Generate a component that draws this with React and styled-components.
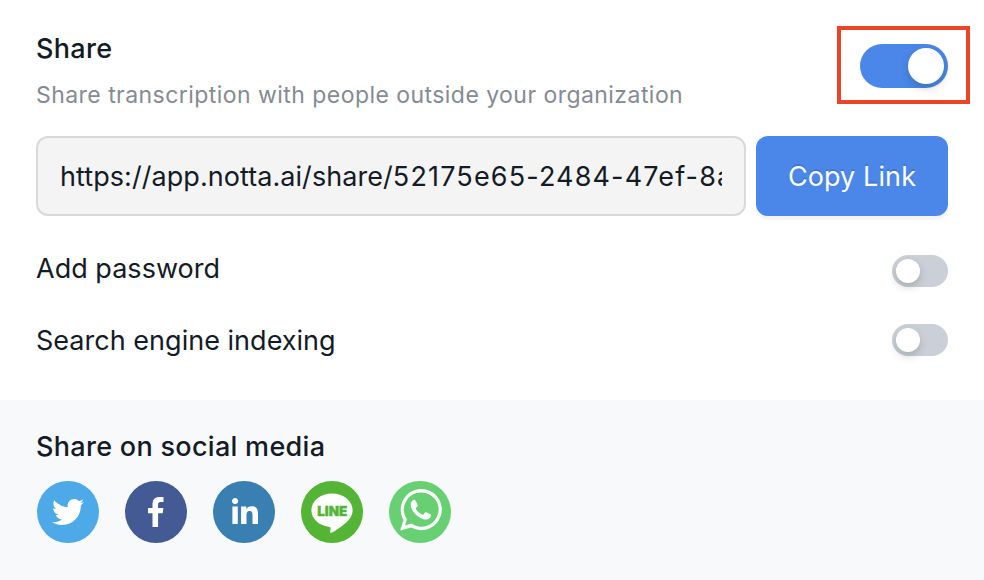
import React, { useState } from "react";
import styled, { createGlobalStyle } from "styled-components";

const GlobalStyle = createGlobalStyle`
    * {
        box-sizing: border-box;
    }
    body {
        margin: 0;
        background: #ffffff;
        color: #131b26;
        font-family: Inter, "Liberation Sans", sans-serif;
    }
`;

const Panel = styled.div`
    display: flex;
    flex-direction: column;
    width: 984px;
    height: 580px;
    overflow: hidden;
`;

const Settings = styled.section`
    height: 400px;
    padding: 28px 36px 0;
`;

const Header = styled.div`
    display: flex;
    justify-content: space-between;
    height: 108px;
`;

const Title = styled.h2`
    margin: 0;
    padding-top: 1px;
    font-size: 27px;
    font-weight: 500;
    line-height: 40px;
    letter-spacing: 0.3px;
    white-space: nowrap;
`;

const Subtitle = styled.p`
    margin: 10px 0 0;
    color: #848b93;
    font-size: 23px;
    line-height: 32px;
    letter-spacing: 0.45px;
    white-space: nowrap;
`;

const Highlight = styled.div`
    position: relative;
    height: 44px;
    margin-top: 16px;

    &::after {
        content: "";
        position: absolute;
        top: -18px;
        right: -22px;
        bottom: -16px;
        left: -23px;
        border: 4px solid #ec4427;
        pointer-events: none;
    }
`;

const Switch = styled.button`
    display: flex;
    align-items: center;
    justify-content: ${(props) => (props.$on ? "flex-end" : "flex-start")};
    width: ${(props) => (props.$large ? 88 : 56)}px;
    height: ${(props) => (props.$large ? 44 : 32)}px;
    padding: 4px;
    border: 0;
    border-radius: 22px;
    background: ${(props) => (props.$on ? "#4a87e8" : "#cbd0d8")};
    cursor: pointer;
`;

const Knob = styled.span`
    width: ${(props) => (props.$large ? 36 : 24)}px;
    height: ${(props) => (props.$large ? 36 : 24)}px;
    border-radius: 50%;
    background: #ffffff;
    box-shadow: 0 4px 8px rgba(0, 35, 11, 0.2);
`;

const LinkRow = styled.div`
    display: flex;
    gap: 10px;
    height: 80px;
`;

const LinkField = styled.div`
    width: 710px;
    padding: 1px 22px 0;
    border: 2px solid #d9d9d9;
    border-radius: 12px;
    background: #f4f4f4;
`;

const LinkText = styled.div`
    overflow: hidden;
    font-size: 27px;
    line-height: 75px;
    letter-spacing: 0.06px;
    white-space: nowrap;
`;

const ShareId = styled.span`
    letter-spacing: 1.15px;
`;

const CopyButton = styled.button`
    width: 192px;
    padding: 0;
    border: 0;
    border-radius: 12px;
    background: #4a87e8;
    box-shadow: 0 4px 0 rgba(0, 0, 0, 0.043);
    color: #ffffff;
    font-family: inherit;
    font-size: 27px;
    letter-spacing: 0.1px;
    text-shadow: 0 -2px 0 rgba(0, 0, 0, 0.12);
    cursor: pointer;
`;

const Options = styled.div`
    display: flex;
    flex-direction: column;
    gap: 34px;
    padding-top: 33px;
`;

const Option = styled.div`
    display: flex;
    align-items: flex-end;
    justify-content: space-between;
    height: ${(props) => props.$height}px;
`;

const OptionLabel = styled.span`
    align-self: flex-start;
    font-size: 27px;
    line-height: 40px;
    letter-spacing: 0.02px;
`;

const Social = styled.section`
    flex: 1;
    padding: 26px 36px 0;
    background: #f8f9fb;
`;

const SocialLinks = styled.div`
    display: flex;
    gap: 24px;
    margin-top: 13px;

    svg {
        display: block;
        width: 64px;
        height: 64px;
    }
`;

const LineText = styled.text`
    fill: #54b435;
    stroke: #54b435;
    stroke-width: 0.35px;
    font-family: Inter, sans-serif;
    font-size: 13.4px;
    font-weight: 900;
`;

const Toggle = ({ large, initial = false, label }) => {
    const [on, setOn] = useState(initial);
    return (
        <Switch $large={large} $on={on} role="switch" aria-checked={on} aria-label={label} onClick={() => setOn(!on)}>
            <Knob $large={large} />
        </Switch>
    );
};

const SocialIcon = ({ color, label, children }) => (
    <svg viewBox="0 0 64 64" role="img" aria-label={label}>
        <circle cx="32" cy="32" r="31" fill={color} />
        {children}
    </svg>
);

export default () => (
    <Panel>
        <GlobalStyle />
        <Settings>
            <Header>
                <div>
                    <Title>Share</Title>
                    <Subtitle>Share transcription with people outside your organization</Subtitle>
                </div>
                <Highlight>
                    <Toggle large initial label="Share" />
                </Highlight>
            </Header>
            <LinkRow>
                <LinkField>
                    <LinkText>
                        https://app.notta.ai/share/<ShareId>52175e65-2484-47ef-8a</ShareId>
                    </LinkText>
                </LinkField>
                <CopyButton>Copy Link</CopyButton>
            </LinkRow>
            <Options>
                <Option $height={38}>
                    <OptionLabel>Add password</OptionLabel>
                    <Toggle label="Add password" />
                </Option>
                <Option $height={35}>
                    <OptionLabel>Search engine indexing</OptionLabel>
                    <Toggle label="Search engine indexing" />
                </Option>
            </Options>
        </Settings>
        <Social>
            <Title>Share on social media</Title>
            <SocialLinks>
                <SocialIcon color="#4da9e8" label="Twitter">
                    <path
                        fill="#fff"
                        d="M48,22.1c-1.2,0.5-2.4,0.9-3.8,1c1.4-0.8,2.4-2.1,2.9-3.6c-1.3,0.8-2.7,1.3-4.2,1.6 C41.7,19.8,40,19,38.2,19c-3.6,0-6.6,2.9-6.6,6.6c0,0.5,0.1,1,0.2,1.5c-5.5-0.3-10.3-2.9-13.5-6.9c-0.6,1-0.9,2.1-0.9,3.3 c0,2.3,1.2,4.3,2.9,5.5c-1.1,0-2.1-0.3-3-0.8c0,0,0,0.1,0,0.1c0,3.2,2.3,5.8,5.3,6.4c-0.6,0.1-1.1,0.2-1.7,0.2c-0.4,0-0.8,0-1.2-0.1 c0.8,2.6,3.3,4.5,6.1,4.6c-2.2,1.8-5.1,2.8-8.2,2.8c-0.5,0-1.1,0-1.6-0.1c2.9,1.9,6.4,2.9,10.1,2.9c12.1,0,18.7-10,18.7-18.7 c0-0.3,0-0.6,0-0.8C46,24.5,47.1,23.4,48,22.1z"
                    />
                </SocialIcon>
                <SocialIcon color="#435a94" label="Facebook">
                    <path
                        fill="#fff"
                        d="M34.1,47V33.3h4.6l0.7-5.3h-5.3v-3.4c0-1.5,0.4-2.6,2.6-2.6l2.8,0v-4.8c-0.5-0.1-2.2-0.2-4.1-0.2 c-4.1,0-6.9,2.5-6.9,7V28H24v5.3h4.5V47H34.1z"
                    />
                </SocialIcon>
                <SocialIcon color="#397fb1" label="LinkedIn">
                    <path
                        fill="#fff"
                        d="M20.4,44h5.4V26.6h-5.4V44z M23.1,18c-1.7,0-3.1,1.4-3.1,3.1c0,1.7,1.4,3.1,3.1,3.1 c1.7,0,3.1-1.4,3.1-3.1C26.2,19.4,24.8,18,23.1,18z M39.5,26.2c-2.6,0-4.4,1.4-5.1,2.8h-0.1v-2.4h-5.2V44h5.4v-8.6 c0-2.3,0.4-4.5,3.2-4.5c2.8,0,2.8,2.6,2.8,4.6V44H46v-9.5C46,29.8,45,26.2,39.5,26.2z"
                    />
                </SocialIcon>
                <SocialIcon color="#54b435" label="LINE">
                    <path
                        fill="#fff"
                        d="M52.62 30.138c0 3.693-1.432 7.019-4.42 10.296h.001c-4.326 4.979-14 11.044-16.201 11.972-2.2.927-1.876-.591-1.786-1.112l.294-1.765c.069-.527.142-1.343-.066-1.865-.232-.574-1.146-.872-1.817-1.016-9.909-1.31-17.245-8.238-17.245-16.51 0-9.226 9.251-16.733 20.62-16.733 11.37 0 20.62 7.507 20.62 16.733z"
                    />
                    <LineText x="17.2" y="35.5" textLength="30" lengthAdjust="spacing">LINE</LineText>
                </SocialIcon>
                <SocialIcon color="#67d072" label="WhatsApp">
                    {/* bubble ring with its tail, then the handset */}
                    <path
                        fill="#fff"
                        fillRule="evenodd"
                        d="M33.1 9a20.6 20.6 0 1 1-9.9 38.6L12.2 50.6l3.3-10.6A20.6 20.6 0 0 1 33.1 9z M33.1 12.5a17.1 17.1 0 0 0-14.2 26.7l-1.9 6.2 6.6-1.9A17.1 17.1 0 1 0 33.1 12.5z"
                    />
                    <path
                        fill="#fff"
                        d="M25.2 20c.8-.5 1.9-.4 2.3.4l2.1 4.4c.3.7.1 1.2-.3 1.7l-1.3 1.5c-.3.4-.3.7-.1 1.1 1.5 2.6 3.8 4.6 6.5 5.7.5.2.8.1 1.1-.3l1.5-1.9c.4-.5.8-.5 1.4-.3l4 1.9c.6.3.7.6.6 1.3-.3 2.5-2.4 4.1-5 4.1-4.2 0-9.6-3.6-12.8-8.1-1.6-2.2-2.5-4.3-2.5-6.5 0-2.1.9-3.9 2.5-5z"
                    />
                </SocialIcon>
            </SocialLinks>
        </Social>
    </Panel>
);
